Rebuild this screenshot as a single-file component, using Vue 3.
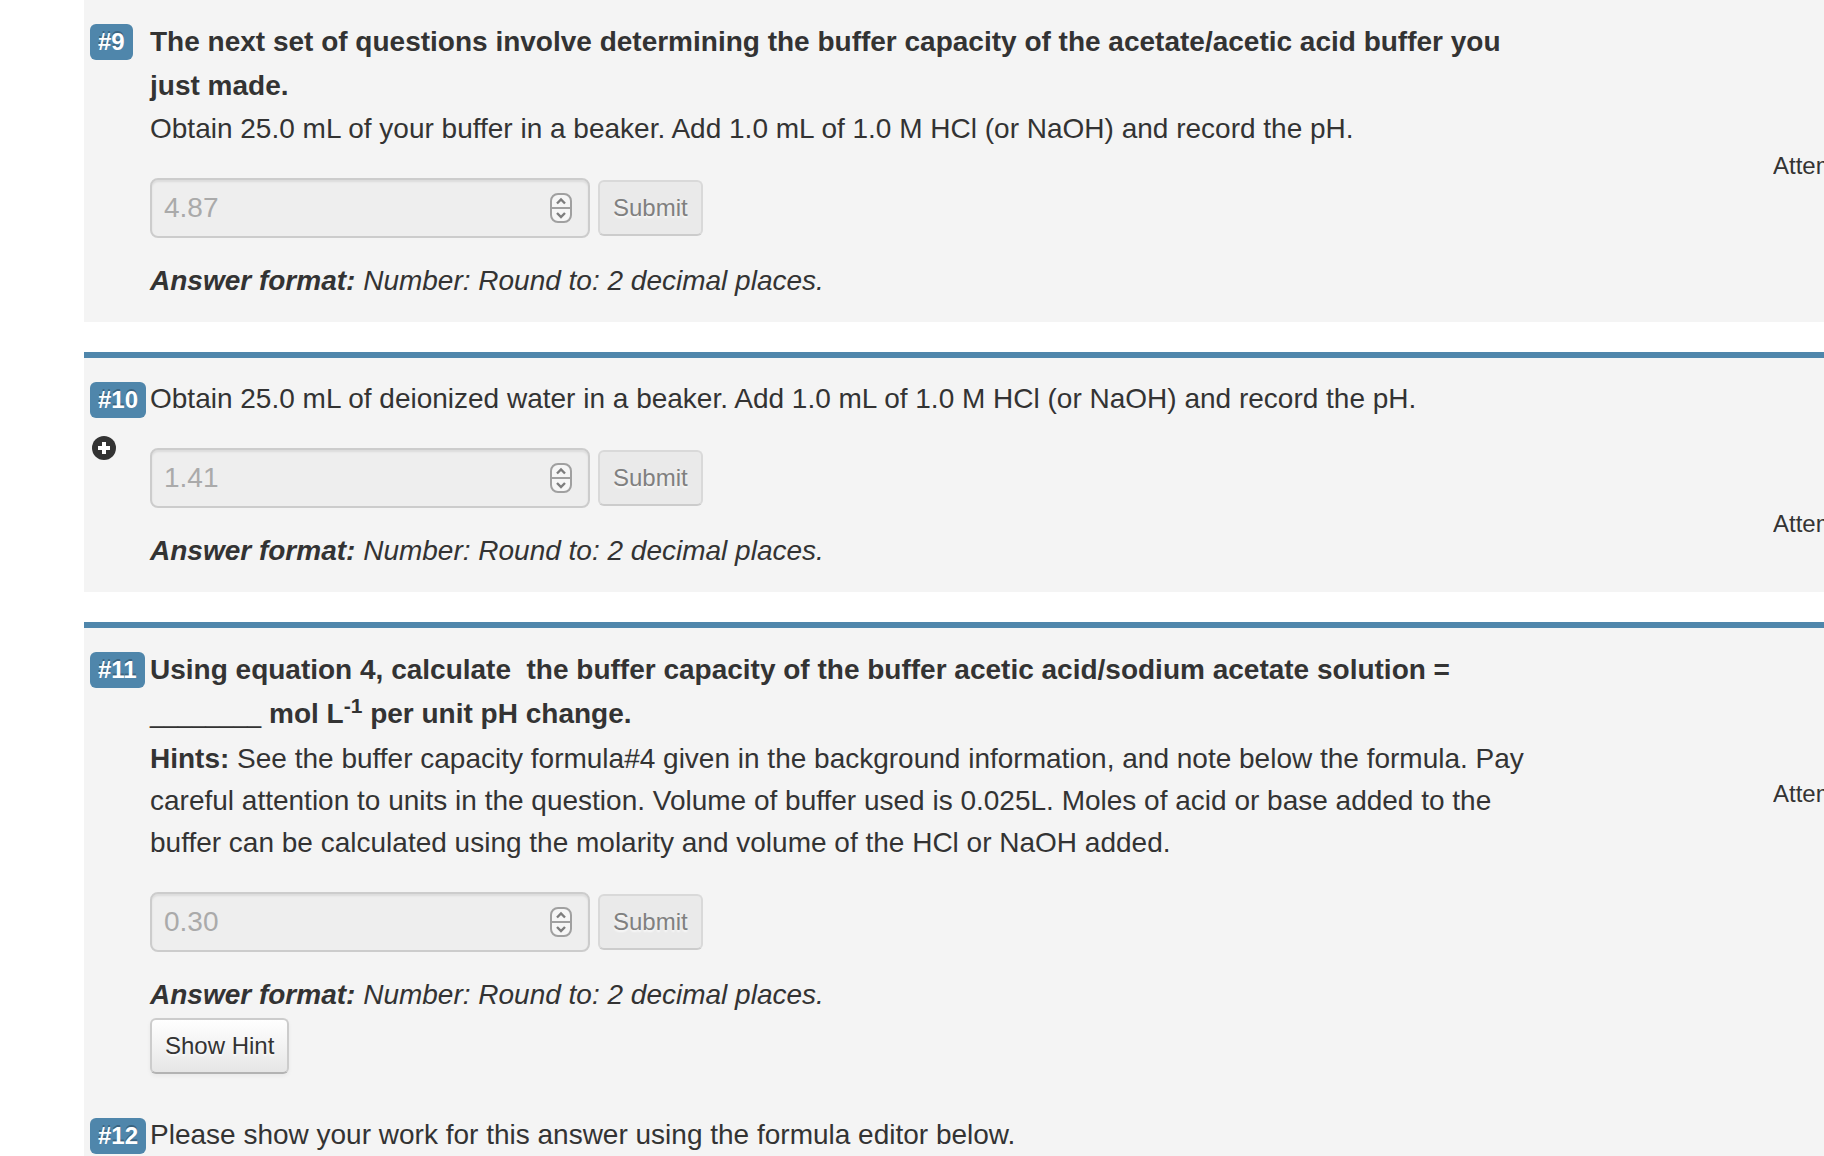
<script setup>
import { ref } from 'vue'

const answers = ref({ q9: '4.87', q10: '1.41', q11: '0.30' })

const questions = [
  { id: 'q9', number: 9 },
  { id: 'q10', number: 10, expandable: true },
  { id: 'q11', number: 11, hint: true },
]
</script>

<template>
  <main class="worksheet">
    <section v-for="q in questions" :key="q.id" class="question">
      <div class="row">
        <div class="marker">
          <span class="badge">#{{ q.number }}</span>
          <button v-if="q.expandable" class="expand" type="button" aria-label="Expand question">
            <svg viewBox="0 0 24 24" width="24" height="24" aria-hidden="true">
              <circle cx="12" cy="12" r="12" fill="#333" />
              <path d="M10 6h4v4h4v4h-4v4h-4v-4H6v-4h4z" fill="#fff" />
            </svg>
          </button>
        </div>

        <div class="content">
          <div v-if="q.id === 'q9'" class="prompt">
            <p class="lead"><strong>The next set of questions involve determining the buffer capacity of the acetate/acetic acid buffer you just made.</strong></p>
            <p>Obtain 25.0 mL of your buffer in a beaker. Add 1.0 mL of 1.0 M HCl (or NaOH) and record the pH.</p>
          </div>
          <div v-else-if="q.id === 'q10'" class="prompt">
            <p>Obtain 25.0 mL of deionized water in a beaker. Add 1.0 mL of 1.0 M HCl (or NaOH) and record the pH.</p>
          </div>
          <div v-else class="prompt">
            <p class="lead"><strong>Using equation 4, calculate&nbsp; the buffer capacity of the buffer acetic acid/sodium acetate solution = <span class="blank">________</span> mol L<sup>-1</sup> per unit pH change.</strong></p>
            <p class="hints"><strong>Hints:</strong> See the buffer capacity formula#4 given in the background information, and note below the formula. Pay careful attention to units in the question. Volume of buffer used is 0.025L. Moles of acid or base added to the buffer can be calculated using the molarity and volume of the HCl or NaOH added.</p>
          </div>

          <form class="answer" @submit.prevent>
            <div class="field">
              <input v-model="answers[q.id]" type="number" step="0.01" disabled :aria-label="`Answer to question ${q.number}`" />
              <svg class="stepper" viewBox="0 0 22 30" width="22" height="30" aria-hidden="true">
                <rect x="1" y="1" width="20" height="28" rx="7" fill="#f6f6f6" stroke="#a0a0a0" stroke-width="2" />
                <path d="M1 15h20" stroke="#a0a0a0" stroke-width="2" />
                <path d="M7 10.5l4-4 4 4M7 20l4 4 4-4" fill="none" stroke="#7d7d7d" stroke-width="2.4" />
              </svg>
            </div>
            <button class="btn" type="submit" disabled>Submit</button>
          </form>

          <p class="format"><strong>Answer format:</strong> Number: Round to: 2 decimal places.</p>
          <button v-if="q.hint" class="btn hint" type="button">Show Hint</button>
        </div>

        <aside class="attempts">Attempts</aside>
      </div>

      <div v-if="q.hint" class="row followup">
        <div class="marker"><span class="badge">#12</span></div>
        <div class="content">
          <p>Please show your work for this answer using the formula editor below.</p>
        </div>
      </div>
    </section>
  </main>
</template>

<style>
html,
body {
  background: #fff;
  overflow: hidden;
}
</style>

<style scoped>
.worksheet {
  display: flex;
  flex-direction: column;
  gap: 30px;
  padding-left: 84px;
  font: 28px/42px "Liberation Sans", Arial, sans-serif;
  color: #333;
}
.question {
  padding: 20px 0;
  border-top: 6px solid #4f86ab;
  background: #f4f4f4;
}
.question:first-child {
  border-top: 0;
}
.row {
  display: flex;
}
.followup {
  margin-top: 40px;
}
.marker {
  flex: 0 0 66px;
  display: flex;
  flex-direction: column;
  align-items: flex-start;
  gap: 18px;
  box-sizing: border-box;
  padding: 4px 0 0 6px;
}
.badge {
  padding: 0 8px;
  border-radius: 6px;
  background: #4f86ab;
  color: #fff;
  font-size: 24px;
  line-height: 36px;
  font-weight: 700;
  text-shadow: 0 -2px 0 rgba(0, 0, 0, 0.25);
}
.expand {
  display: flex;
  padding: 0;
  margin-left: 2px;
  border: 0;
  background: none;
}
.content {
  flex: 1;
  padding-right: 223px;
}
p {
  margin: 0;
}
.lead {
  line-height: 44px;
}
.hints {
  padding-top: 2px;
}
.blank {
  font-weight: 400;
  font-size: 25px;
  line-height: 1;
}
sup {
  font-size: 21px;
  line-height: 0;
  vertical-align: 10px;
}
.answer {
  display: flex;
  align-items: center;
  gap: 8px;
  margin: 28px 0 22px;
}
.field {
  display: flex;
  align-items: center;
  box-sizing: border-box;
  width: 440px;
  height: 60px;
  padding: 0 16px 0 12px;
  border: 2px solid #ccc;
  border-radius: 8px;
  background: #eee;
  box-shadow: inset 0 2px 2px rgba(0, 0, 0, 0.075);
}
.field input {
  flex: 1;
  min-width: 0;
  padding: 0;
  border: 0;
  background: none;
  color: #aaa;
  font: inherit;
  appearance: textfield;
}
.field input::-webkit-inner-spin-button {
  appearance: none;
  margin: 0;
}
.stepper {
  flex: none;
}
.btn {
  display: block;
  height: 56px;
  padding: 0 13px;
  border: 2px solid #ccc;
  border-bottom-color: #b3b3b3;
  border-radius: 6px;
  background: linear-gradient(#fff, #e6e6e6);
  box-shadow: 0 2px 4px rgba(0, 0, 0, 0.05);
  color: #333;
  font: 24px/40px "Liberation Sans", Arial, sans-serif;
  text-shadow: 0 2px 2px rgba(255, 255, 255, 0.75);
}
.btn:disabled {
  border-color: #d9d9d9;
  border-bottom-color: #ccc;
  background: #eaeaea;
  box-shadow: none;
  color: #808080;
}
.format {
  font-style: italic;
}
.hint {
  margin-top: 2px;
}
.attempts {
  flex: 0 0 51px;
  overflow: hidden;
  padding-top: 126px;
  font-size: 24px;
  line-height: 40px;
  white-space: nowrap;
}
</style>
